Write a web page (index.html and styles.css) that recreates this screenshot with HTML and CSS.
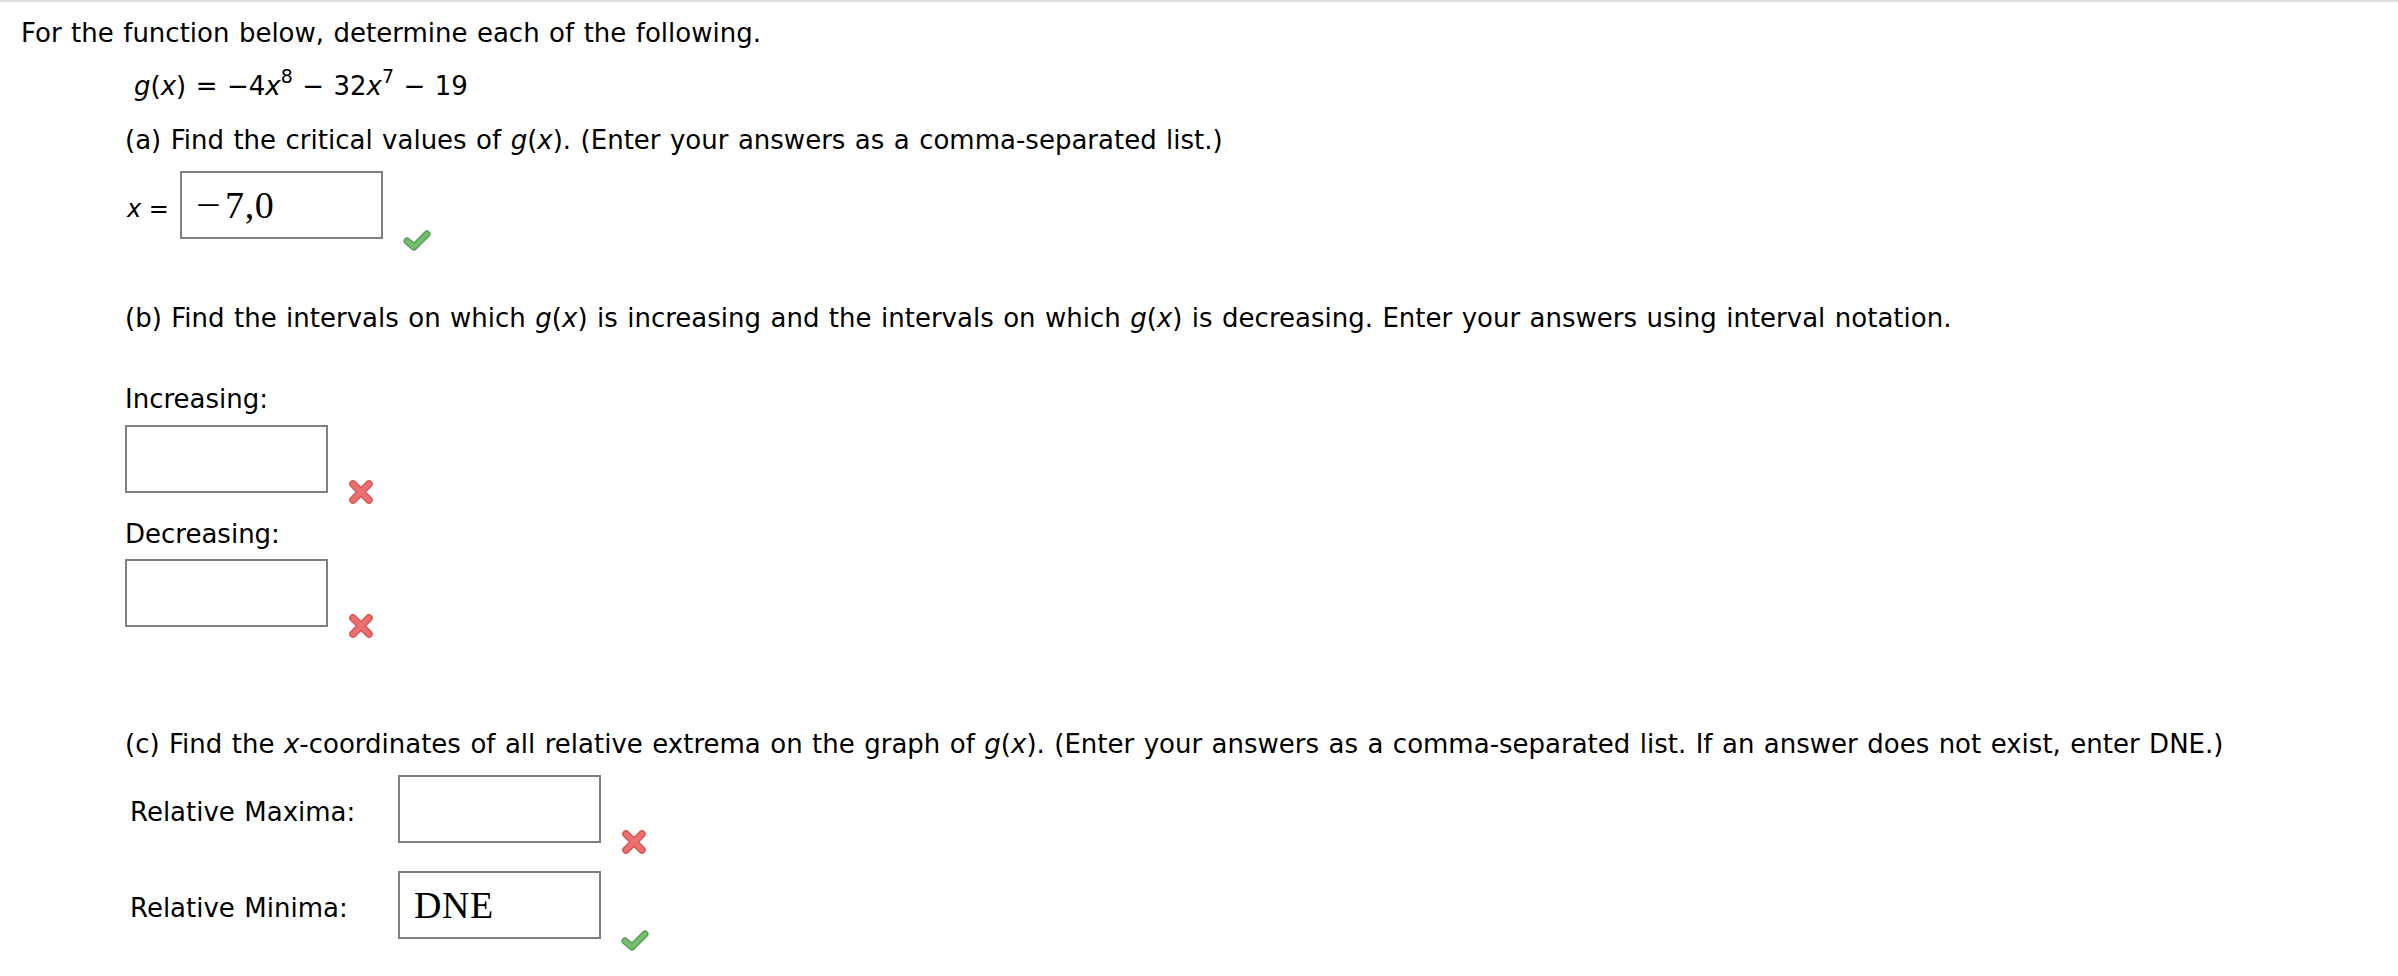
FILE: index.html
```html
<!DOCTYPE html>
<html lang="en">
<head>
<meta charset="utf-8">
<title>Question</title>
<link rel="stylesheet" href="styles.css">
</head>
<body>
<div class="page">
  <p class="intro">For the function below, determine each of the following.</p>
  <div class="indent">
    <p class="func"><i>g</i>(<i>x</i>) = −4<i>x</i><sup>8</sup> − 32<i>x</i><sup>7</sup> − 19</p>

    <p class="part part-a">(a) Find the critical values of <i>g</i>(<i>x</i>). (Enter your answers as a comma-separated list.)</p>
    <div class="row row-a">
      <span class="xlabel"><i>x</i> =</span>
      <div class="box"><span class="ans"><span class="minus">−</span>7,0</span></div>
      <svg class="icon check" viewBox="0 0 28 22" aria-hidden="true">
        <path d="M4 12 L11 18 L24 5" fill="none" stroke="#4f9a4f" stroke-width="7" stroke-linecap="round" stroke-linejoin="round"/>
        <path d="M4 12 L11 18 L24 5" fill="none" stroke="#74bf6e" stroke-width="4.5" stroke-linecap="round" stroke-linejoin="round"/>
      </svg>
    </div>

    <p class="part part-b">(b) Find the intervals on which <i>g</i>(<i>x</i>) is increasing and the intervals on which <i>g</i>(<i>x</i>) is decreasing. Enter your answers using interval notation.</p>
    <p class="label label-inc">Increasing:</p>
    <div class="row row-stack">
      <div class="box"></div>
      <svg class="icon cross" viewBox="0 0 26 26" aria-hidden="true">
        <path d="M5 5 L21 21 M21 5 L5 21" fill="none" stroke="#d85050" stroke-width="7.5" stroke-linecap="round"/>
        <path d="M5 5 L21 21 M21 5 L5 21" fill="none" stroke="#ec7070" stroke-width="5" stroke-linecap="round"/>
      </svg>
    </div>
    <p class="label label-dec">Decreasing:</p>
    <div class="row row-stack">
      <div class="box"></div>
      <svg class="icon cross" viewBox="0 0 26 26" aria-hidden="true">
        <path d="M5 5 L21 21 M21 5 L5 21" fill="none" stroke="#d85050" stroke-width="7.5" stroke-linecap="round"/>
        <path d="M5 5 L21 21 M21 5 L5 21" fill="none" stroke="#ec7070" stroke-width="5" stroke-linecap="round"/>
      </svg>
    </div>

    <p class="part part-c">(c) Find the <i>x</i>-coordinates of all relative extrema on the graph of <i>g</i>(<i>x</i>). (Enter your answers as a comma-separated list. If an answer does not exist, enter DNE.)</p>
    <div class="row row-max">
      <span class="rlabel">Relative Maxima:</span>
      <div class="box"></div>
      <svg class="icon cross" viewBox="0 0 26 26" aria-hidden="true">
        <path d="M5 5 L21 21 M21 5 L5 21" fill="none" stroke="#d85050" stroke-width="7.5" stroke-linecap="round"/>
        <path d="M5 5 L21 21 M21 5 L5 21" fill="none" stroke="#ec7070" stroke-width="5" stroke-linecap="round"/>
      </svg>
    </div>
    <div class="row row-min">
      <span class="rlabel">Relative Minima:</span>
      <div class="box"><span class="ans">DNE</span></div>
      <svg class="icon check" viewBox="0 0 28 22" aria-hidden="true">
        <path d="M4 12 L11 18 L24 5" fill="none" stroke="#4f9a4f" stroke-width="7" stroke-linecap="round" stroke-linejoin="round"/>
        <path d="M4 12 L11 18 L24 5" fill="none" stroke="#74bf6e" stroke-width="4.5" stroke-linecap="round" stroke-linejoin="round"/>
      </svg>
    </div>
  </div>
</div>
</body>
</html>
```

FILE: styles.css
```css
html, body {
  margin: 0;
  padding: 0;
  background: #ffffff;
}

body {
  font-family: "DejaVu Sans", Verdana, sans-serif;
  font-size: 26px;
  line-height: 30px;
  word-spacing: 1.2px;
  color: #000000;
}

.page {
  border-top: 2px solid #dddddd;
  padding: 16px 21px 36px 21px;
}

p {
  margin: 0;
}

.indent {
  padding-left: 104px;
}

.func {
  margin-top: 23px;
  padding-left: 9px;
}

.func sup {
  font-size: 19px;
  line-height: 0;
  vertical-align: 12px;
}

.part-a {
  margin-top: 24px;
}

.row {
  display: flex;
  align-items: flex-start;
}

.row-a {
  margin-top: 16px;
}

.xlabel {
  font-size: 24px;
  margin-top: 23px;
  width: 55px;
  padding-left: 2px;
  box-sizing: border-box;
  word-spacing: 0;
  flex: none;
}

.box {
  box-sizing: border-box;
  width: 203px;
  height: 68px;
  border: 2px solid #808080;
  padding: 12px 14px;
  flex: none;
}

.ans {
  font-family: "Liberation Serif", "Times New Roman", serif;
  font-size: 38px;
  line-height: 40px;
  letter-spacing: 0.6px;
  display: block;
}

.minus {
  display: inline-block;
  transform: scaleX(1.15);
  transform-origin: left center;
  margin-right: 7px;
}

.icon {
  align-self: flex-end;
  flex: none;
  margin-left: 20px;
  margin-bottom: -12px;
}

.check {
  width: 28px;
  height: 22px;
}

.cross {
  width: 26px;
  height: 26px;
}

.part-b {
  margin-top: 64px;
}

.label-inc {
  margin-top: 51px;
}

.label-dec {
  margin-top: 26px;
}

.row-stack {
  margin-top: 11px;
}

.label-dec + .row-stack {
  margin-top: 10px;
}

.part-c {
  margin-top: 102px;
}

.row-max {
  margin-top: 16px;
}

.row-min {
  margin-top: 28px;
}

.rlabel {
  width: 273px;
  padding-left: 5px;
  box-sizing: border-box;
  margin-top: 22px;
  flex: none;
}
```
